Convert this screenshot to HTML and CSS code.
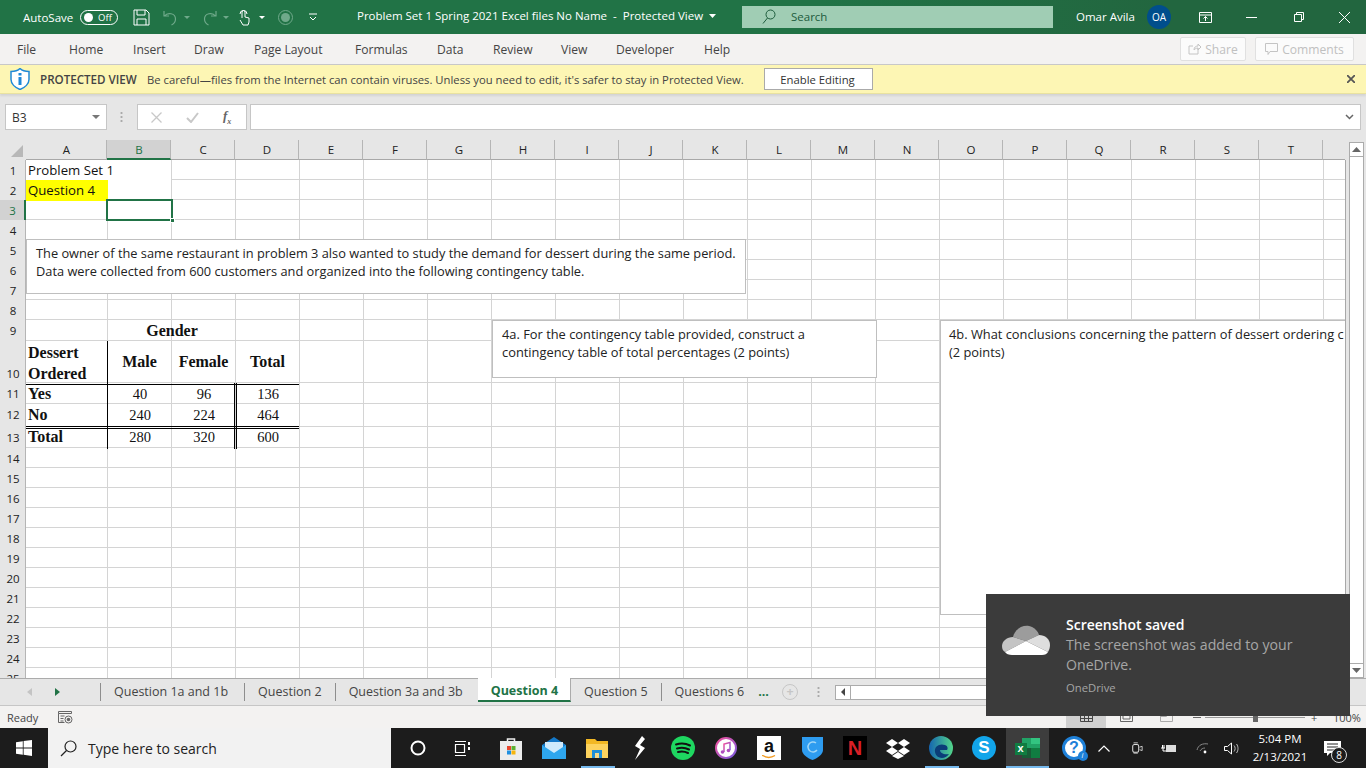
FILE: index.html
```html
<!DOCTYPE html>
<html lang="en">
<head>
    <meta charset="UTF-8">
    <title>Problem Set 1 Spring 2021 Excel files No Name - Protected View</title>
    <link rel="stylesheet" href="styles.css">
</head>
<body>
    <div class="titlebar">
        <span class="autosave">AutoSave</span>
        <span class="toggle"><i></i>Off</span>
        <svg class="save" width="17" height="17" viewBox="0 0 17 17"><path d="M1 1h12l3 3v12H1zM4 1v5h8V1M4 16v-6h9v6" fill="none" stroke="#fff"/></svg>
        <svg class="undo" width="15" height="17" viewBox="0 0 15 17"><path d="M1 2v5h5M1.5 7c3-4 11-3 11 3 0 3-2 5-4 6" fill="none" stroke="#6fa98a" stroke-width="1.2"/></svg>
        <span class="qat-caret dim c1"></span>
        <svg class="redo" width="15" height="17" viewBox="0 0 15 17"><path d="M14 2v5H9M13.5 7c-3-4-11-3-11 3 0 3 2 5 4 6" fill="none" stroke="#6fa98a" stroke-width="1.2"/></svg>
        <span class="qat-caret dim c2"></span>
        <svg class="touch" width="12" height="17" viewBox="0 0 12 17"><path d="M4 9V3a1.5 1.5 0 0 1 3 0v5l4 1v4l-1 3H5L2 11M2 5a3.5 3.5 0 0 1 7 0" fill="none" stroke="#fff"/></svg>
        <span class="qat-caret c3"></span>
        <span class="record"><i></i></span>
        <svg class="more" width="8" height="8" viewBox="0 0 8 8"><path d="M0 1h8M1 4l3 3 3-3" fill="none" stroke="#fff"/></svg>
        <span class="doc-title">Problem Set 1 Spring 2021 Excel files No Name &nbsp;-&nbsp; Protected View &nbsp;<svg width="7" height="4" viewBox="0 0 7 4"><path d="M0 0l3.5 4L7 0z" fill="#fff"/></svg></span>
        <div class="searchbox">
            <svg width="14" height="16" viewBox="0 0 14 16"><circle cx="8.5" cy="5.5" r="4.5" fill="none" stroke="#1d5c3c"/><path d="M5.5 9L1 14.5" stroke="#1d5c3c"/></svg>
            <span>Search</span>
        </div>
        <span class="username">Omar Avila</span>
        <span class="avatar">OA</span>
        <svg class="ribbon-opt" width="13" height="11" viewBox="0 0 13 11"><path d="M.5.5h12v10H.5zM.5 3h12M6.5 9V4.5M4.5 6.5l2-2 2 2" fill="none" stroke="#fff"/></svg>
        <span class="win-btn"><svg width="11" height="10" viewBox="0 0 11 10"><path d="M0 5.5h11" stroke="#fff"/></svg></span>
        <span class="win-btn"><svg width="10" height="10" viewBox="0 0 10 10"><path d="M.5 2.5h7v7h-7zM2.5 2.5v-2h7v7h-2" fill="none" stroke="#fff"/></svg></span>
        <span class="win-btn last"><svg width="11" height="11" viewBox="0 0 11 11"><path d="M0 0l11 11M11 0L0 11" stroke="#fff"/></svg></span>
    </div>

    <div class="tabs">
        <span class="tab file">File</span>
        <span class="tab home">Home</span>
        <span class="tab insert">Insert</span>
        <span class="tab draw">Draw</span>
        <span class="tab layout">Page Layout</span>
        <span class="tab formulas">Formulas</span>
        <span class="tab data">Data</span>
        <span class="tab review">Review</span>
        <span class="tab view">View</span>
        <span class="tab developer">Developer</span>
        <span class="tab help">Help</span>
        <span class="tab-btn share"><svg width="13" height="12" viewBox="0 0 13 12"><path d="M10 5v6H1V3h4M6 7c0-3 2-4 4-4V1l3 3-3 3V5C8 5 7 6 6 7z" fill="none" stroke="#c4c4c4"/></svg>Share</span>
        <span class="tab-btn comments"><svg width="13" height="12" viewBox="0 0 13 12"><path d="M.5.5h12v8H5l-2 3v-3H.5z" fill="none" stroke="#c4c4c4"/></svg>Comments</span>
    </div>

    <div class="protected">
        <svg class="shield" width="20" height="22" viewBox="0 0 20 22"><path d="M10 .5c2 2 5 3 9 3v8c0 4-4 8-9 10-5-2-9-6-9-10v-8c4 0 7-1 9-3z" fill="#fff" stroke="#1e88d8" stroke-width="1.5"/><path d="M8.5 9h3v8h-3zM8.5 5h3v2.5h-3z" fill="#1e88d8"/></svg>
        <b>PROTECTED VIEW</b>
        <span class="prot-msg">Be careful—files from the Internet can contain viruses. Unless you need to edit, it's safer to stay in Protected View.</span>
        <button class="enable">Enable Editing</button>
        <svg class="prot-close" width="8" height="8" viewBox="0 0 8 8"><path d="M0 0l8 8M8 0L0 8" stroke="#555" stroke-width="1.8"/></svg>
    </div>

    <div class="formula-bar">
        <div class="namebox">B3<span class="caret"></span></div>
        <span class="dots"></span>
        <div class="fx-btns">
            <svg width="11" height="11" viewBox="0 0 11 11"><path d="M.5.5l10 10M10.5.5l-10 10" stroke="#c8c8c8" stroke-width="1.3"/></svg>
            <svg width="13" height="11" viewBox="0 0 13 11"><path d="M1 6l4 4 7-9" fill="none" stroke="#c8c8c8" stroke-width="2"/></svg>
            <span class="fx">f<sub>x</sub></span>
        </div>
        <div class="formula-input"><svg width="9" height="6" viewBox="0 0 9 6"><path d="M1 1l3.5 3.5L8 1" fill="none" stroke="#666" stroke-width="1.5"/></svg></div>
    </div>

    <div class="sheet">
        <div class="col-heads">
            <span class="corner"></span>
            <span class="ch wide">A</span>
            <span class="ch sel">B</span>
            <span class="ch">C</span><span class="ch">D</span><span class="ch">E</span><span class="ch">F</span><span class="ch">G</span>
            <span class="ch">H</span><span class="ch">I</span><span class="ch">J</span><span class="ch">K</span><span class="ch">L</span>
            <span class="ch">M</span><span class="ch">N</span><span class="ch">O</span><span class="ch">P</span><span class="ch">Q</span>
            <span class="ch">R</span><span class="ch">S</span><span class="ch">T</span>
            <span class="ch rest"></span>
        </div>
        <div class="grid">
            <div class="row"><span class="rh">1</span><span class="cell spill">Problem Set 1</span></div>
            <div class="row"><span class="rh">2</span><span class="cell yellow">Question 4</span></div>
            <div class="row"><span class="rh sel">3</span></div>
            <div class="row"><span class="rh">4</span></div>
            <div class="row"><span class="rh">5</span></div>
            <div class="row"><span class="rh">6</span></div>
            <div class="row"><span class="rh">7</span></div>
            <div class="row"><span class="rh">8</span></div>
            <div class="row h21"><span class="rh">9</span><span class="cell gender">Gender</span></div>
            <div class="row h42 thick-bottom"><span class="rh bottom">10</span><span class="cell tnr left thick-r two-line">Dessert<br>Ordered</span><span class="cell tnr">Male</span><span class="cell tnr">Female</span><span class="cell tnr">Total</span></div>
            <div class="row h21"><span class="rh">11</span><span class="cell tnr left thick-r">Yes</span><span class="cell num">40</span><span class="cell num double-r">96</span><span class="cell num">136</span></div>
            <div class="row h23 double-bottom"><span class="rh">12</span><span class="cell tnr left thick-r">No</span><span class="cell num">240</span><span class="cell num double-r">224</span><span class="cell num">464</span></div>
            <div class="row h21 total"><span class="rh">13</span><span class="cell tnr left thick-r">Total</span><span class="cell num">280</span><span class="cell num double-r">320</span><span class="cell num">600</span></div>
            <div class="row"><span class="rh">14</span></div>
            <div class="row"><span class="rh">15</span></div>
            <div class="row"><span class="rh">16</span></div>
            <div class="row"><span class="rh">17</span></div>
            <div class="row"><span class="rh">18</span></div>
            <div class="row"><span class="rh">19</span></div>
            <div class="row"><span class="rh">20</span></div>
            <div class="row"><span class="rh">21</span></div>
            <div class="row"><span class="rh">22</span></div>
            <div class="row"><span class="rh">23</span></div>
            <div class="row"><span class="rh">24</span></div>
            <div class="row"><span class="rh">25</span></div>

            <div class="cell-cursor"></div>
            <div class="textbox box-intro">The owner of the same restaurant in problem 3 also wanted to study the demand for dessert during the same period.<br>Data were collected from 600 customers and organized into the following contingency table.</div>
            <div class="textbox box-4a">4a. For the contingency table provided, construct a<br>contingency table of total percentages (2 points)</div>
            <div class="textbox box-4b">4b. What conclusions concerning the pattern of dessert ordering c<br>(2 points)</div>
        </div>
        <div class="vscroll">
            <span class="sb-btn"><svg width="9" height="5" viewBox="0 0 9 5"><path d="M4.5 0L9 5H0z" fill="#666"/></svg></span>
            <span class="sb-thumb"></span>
            <span class="sb-btn"><svg width="9" height="5" viewBox="0 0 9 5"><path d="M4.5 5L9 0H0z" fill="#666"/></svg></span>
        </div>
    </div>

    <div class="sheet-tabs">
        <span class="nav-arrows">
            <svg width="5" height="8" viewBox="0 0 5 8"><path d="M5 0v8L0 4z" fill="#c4c4c4"/></svg>
            <svg width="5" height="8" viewBox="0 0 5 8"><path d="M0 0v8l5-4z" fill="#217346"/></svg>
        </span>
        <span class="stab first">Question 1a and 1b</span>
        <span class="stab">Question 2</span>
        <span class="stab last">Question 3a and 3b</span>
        <span class="stab active">Question 4</span>
        <span class="stab">Question 5</span>
        <span class="stab plain">Questions 6</span>
        <span class="ellipsis">...</span>
        <span class="add-sheet">+</span>
        <span class="dots small"></span>
        <div class="hscroll"><span class="sb-left"><svg width="4" height="8" viewBox="0 0 4 8"><path d="M4 0v8L0 4z" fill="#444"/></svg></span></div>
    </div>

    <div class="statusbar">
        <span class="ready">Ready</span>
        <svg width="15" height="13" viewBox="0 0 15 13"><path d="M.5.5h13v2H.5zM.5 2.5v9h6M2.5 5h4M2.5 7.5h3M2.5 10h3" fill="none" stroke="#666"/><circle cx="10.5" cy="8.5" r="3.5" fill="none" stroke="#666"/><circle cx="10.5" cy="8.5" r="1.8" fill="#666"/></svg>
        <div class="view-btns">
            <span class="vbtn on"><svg width="13" height="10" viewBox="0 0 13 10"><path d="M.5.5h12v9H.5zM.5 3.5h12M.5 6.5h12M4.5.5v9M8.5.5v9" fill="none" stroke="#444"/></svg></span>
            <span class="vbtn"><svg width="13" height="10" viewBox="0 0 13 10"><path d="M.5.5h12v9H.5zM3 3h7v4H3z" fill="none" stroke="#666"/></svg></span>
            <span class="vbtn"><svg width="13" height="10" viewBox="0 0 13 10"><path d="M.5.5h12v9H.5zM6.5.5v4H.5" fill="none" stroke="#aaa"/></svg></span>
        </div>
        <span class="zoom-minus"></span>
        <div class="zoom-track"><i></i></div>
        <span class="zoom-plus">+</span>
        <span class="zoom-pct">100%</span>
    </div>

    <div class="taskbar">
        <span class="start"><svg width="16" height="16" viewBox="0 0 16 16"><path d="M0 2.2l6.8-1V7.6H0zM7.600 1.100L16 0v7.600H7.600zM0 8.400h6.800v6.400L0 13.800zM7.600 8.400H16V16l-8.400-1.200z" fill="#fff"/></svg></span>
        <div class="tb-search">
            <svg width="17" height="17" viewBox="0 0 17 17"><circle cx="10.5" cy="6.5" r="5.5" fill="none" stroke="#222" stroke-width="1.2"/><path d="M6.5 10.5L1 16" stroke="#222" stroke-width="1.2"/></svg>
            <span>Type here to search</span>
        </div>
        <span class="tb-item cortana"><svg width="16" height="16" viewBox="0 0 16 16"><circle cx="8" cy="8" r="6.5" fill="none" stroke="#fff" stroke-width="2"/></svg></span>
        <span class="tb-item taskview"><svg width="16" height="15" viewBox="0 0 16 15"><path d="M1 .5h11M1 14.5h11M1.5 3.5h9v8h-9z" fill="none" stroke="#fff" stroke-width="1.2"/><path d="M14 1h2v3h-2zM14 6h2v3h-2z" fill="#fff"/></svg></span>
        <span class="tb-item"><svg width="24" height="24" viewBox="0 0 24 24"><path d="M8.5 6V3h7v3" fill="none" stroke="#eee" stroke-width="1.5"/><path d="M1 5h22v19H1z" fill="#ececec"/><path d="M8 10h4v4H8z" fill="#e8452c"/><path d="M12.5 10h4v4h-4z" fill="#5bb030"/><path d="M8 14.5h4v4H8z" fill="#1f8fe0"/><path d="M12.5 14.5h4v4h-4z" fill="#f5b50d"/></svg></span>
        <span class="tb-item"><svg width="24" height="22" viewBox="0 0 24 22"><path d="M0 8L12 0l12 8v14H0z" fill="#1478c8"/><path d="M3 5h18v6l-9 6-9-6z" fill="#cfeafc"/><path d="M0 8l12 8 12-8v14H0z" fill="#2ea6ee"/></svg></span>
        <span class="tb-item running"><svg width="22" height="19" viewBox="0 0 22 19"><path d="M0 0h9l2 2h11v17H0z" fill="#f2b824"/><path d="M0 5h22v14H0z" fill="#fdd35e"/><path d="M6 11h10v8H6z" fill="#1f8fd8"/><path d="M9 14h4v5H9z" fill="#f6d98a"/></svg></span>
        <span class="tb-item"><svg width="12" height="24" viewBox="0 0 12 24"><path d="M8 0L1 10l5 3-5 11 10-12-5-3 5-6z" fill="#fff"/></svg></span>
        <span class="tb-item"><svg width="24" height="24" viewBox="0 0 24 24"><circle cx="12" cy="12" r="12" fill="#1ed760"/><path d="M5 8.5c5-1.5 10-1 14 1M6 12.500c4-1 8.500-.7 12 1M7 16c3.500-.8 7-.5 10 1" fill="none" stroke="#111" stroke-width="2" stroke-linecap="round"/></svg></span>
        <span class="tb-item"><svg width="22" height="22" viewBox="0 0 22 22"><defs><linearGradient id="itunes" x1="0" y1="0" x2="1" y2="1"><stop offset="0" stop-color="#f2509a"/><stop offset="1" stop-color="#7a5be0"/></linearGradient></defs><circle cx="11" cy="11" r="10" fill="#fff" stroke="url(#itunes)" stroke-width="2"/><path d="M9 15V7l6-1.5V13" fill="none" stroke="url(#itunes)" stroke-width="1.5"/><circle cx="7.5" cy="15" r="1.8" fill="#b04fc0"/><circle cx="13.5" cy="13.5" r="1.8" fill="#b04fc0"/></svg></span>
        <span class="tb-item amazon">a<svg width="14" height="4" viewBox="0 0 14 4"><path d="M0 0c4 3 9 3 13 .5" fill="none" stroke="#f29a1f" stroke-width="1.3"/></svg></span>
        <span class="tb-item"><svg width="21" height="24" viewBox="0 0 21 24"><path d="M0 1h21v13c0 4-5 8-10.5 10C5 22 0 18 0 14z" fill="#2e9cf0"/><path d="M14 7a5 5 0 1 0 1 7" fill="none" stroke="#9fd6f7" stroke-width="1.5"/></svg></span>
        <span class="tb-item netflix">N</span>
        <span class="tb-item"><svg width="24" height="21" viewBox="0 0 24 21"><path d="M6 1l6 4-6 4-6-4zM18 1l6 4-6 4-6-4zM6 9l6 4-6 4-6-4zM18 9l6 4-6 4-6-4zM12 14l6 4-6 3-6-3z" fill="#fff"/></svg></span>
        <span class="tb-item running"><svg width="24" height="24" viewBox="0 0 24 24"><defs><linearGradient id="edge" x1="0" y1="0" x2="1" y2="0"><stop offset="0" stop-color="#1565b0"/><stop offset="1" stop-color="#53d68a"/></linearGradient></defs><circle cx="12" cy="12" r="12" fill="url(#edge)"/><path d="M6 16c-1-6 5-9 10-7 3 1 3 4 2 5H11c0 3 4 5 9 4-4 6-13 5-14-2z" fill="#0b3d78"/></svg></span>
        <span class="tb-item skype">S</span>
        <span class="tb-item excel">
            <svg class="excel-logo" width="24" height="20" viewBox="0 0 24 20"><path d="M6 0h18v20H6z" fill="#21a366"/><path d="M15 0h9v6h-9z" fill="#33c481"/><path d="M6 10h9v10H6z" fill="#185c37"/><path d="M15 10h9v10h-9z" fill="#107c41"/></svg>
            <b>x</b>
        </span>
        <span class="tb-item help"><span class="help-q">?</span><i>i</i></span>
        <svg class="tray-up" width="12" height="7" viewBox="0 0 12 7"><path d="M.5 6.5L6 1l5.5 5.5" fill="none" stroke="#fff" stroke-width="1.2"/></svg>
        <svg class="tray-meet" width="12" height="14" viewBox="0 0 14 14"><rect x="2" y="3" width="7" height="9" rx="2" fill="none" stroke="#ddd" stroke-width="1.2"/><path d="M3 1h5M10 6l3-1v5l-3-1M3 13h5" fill="none" stroke="#ddd"/></svg>
        <svg class="tray-power" width="16" height="11" viewBox="0 0 16 11"><path d="M5 2h10v7H5z" fill="#ddd"/><path d="M0 5h4M1.5 2v3M3 2v3M2 5v3h3" fill="none" stroke="#fff"/></svg>
        <svg class="tray-wifi" width="14" height="12" viewBox="0 0 14 12"><path d="M1 8c1-5 6-7 11-6M4 9c1-2 3-3 5-3" fill="none" stroke="#888"/><circle cx="9" cy="10" r="1.4" fill="#fff"/></svg>
        <svg class="tray-vol" width="16" height="13" viewBox="0 0 16 13"><path d="M.5 4.5h3l4-3.500v11l-4-3.500h-3z" fill="none" stroke="#fff"/><path d="M10 3.500c1.500 1.500 1.500 4.500 0 6M12.500 2c2 2.500 2 6.500 0 9" fill="none" stroke="#bbb"/></svg>
        <div class="clock"><span>5:04 PM</span><span>2/13/2021</span></div>
        <span class="notify">
            <svg width="17" height="15" viewBox="0 0 17 15"><path d="M0 0h17v12H6l-3 3v-3H0z" fill="#fff"/><path d="M3 3h11M3 6h11M3 9h7" stroke="#222"/></svg>
            <em>8</em>
        </span>
    </div>

    <div class="toast">
        <svg class="toast-cloud" width="48" height="32" viewBox="0 0 48 32"><path d="M11 12C13 4 20 0 27 1c5 1 9 5 10 9L24 16z" fill="#9c9c9c"/><path d="M11 12c-6 0-11 4-11 9 0 3 1 5 3 6l21-11z" fill="#c4c4c4"/><path d="M37 10c6 0 11 4 11 10 0 3-1 5-2 7L24 16z" fill="#dedede"/><path d="M3 27c1 2 4 3 7 3h30c3 0 5-1 6-3L24 16z" fill="#fff"/></svg>
        <div class="toast-body">
            <strong>Screenshot saved</strong>
            <p>The screenshot was added to your OneDrive.</p>
            <small>OneDrive</small>
        </div>
    </div>
</body>
</html>
```

FILE: styles.css
```css
html, body {
    margin: 0;
    padding: 0;
    height: 768px;
    overflow: hidden;
}

body {
    width: 1366px;
    position: relative;
    font-family: 'Open Sans', 'Noto Sans', Arial, sans-serif;
    font-size: 12px;
    color: #333;
    background-color: #e6e6e6;
}

svg {
    flex: none;
}

/* title bar */
.titlebar {
    height: 34px;
    background: linear-gradient(to right, #217346 60%, #22663f 85%);
    color: #fff;
    display: flex;
    align-items: center;
    padding-left: 23px;
    box-sizing: border-box;
}

.autosave {
    width: 57px;
    font-size: 11.5px;
}

.toggle {
    width: 38px;
    height: 15px;
    border: 1px solid #fff;
    border-radius: 9px;
    display: flex;
    align-items: center;
    font-size: 9.5px;
    box-sizing: border-box;
    padding-left: 3px;
    gap: 5px;
}

.toggle i {
    width: 9px;
    height: 9px;
    background-color: #fff;
    border-radius: 50%;
}

.save {
    margin-left: 15px;
}

.undo {
    margin-left: 13px;
}

.redo {
    margin-left: 12px;
}

.touch {
    margin-left: 9px;
}

.qat-caret {
    width: 0;
    height: 0;
    border-left: 3px solid transparent;
    border-right: 3px solid transparent;
    border-top: 3px solid #fff;
}

.qat-caret.dim {
    border-top-color: #6fa98a;
}

.qat-caret.c1,
.qat-caret.c2 {
    margin-left: 6px;
}

.qat-caret.c3 {
    margin-left: 9px;
}

.record {
    width: 15px;
    height: 15px;
    margin-left: 13px;
    border: 1px solid #6fa98a;
    border-radius: 50%;
    box-sizing: border-box;
    display: flex;
    align-items: center;
    justify-content: center;
}

.record i {
    width: 9px;
    height: 9px;
    border-radius: 50%;
    background-color: #6fa98a;
}

.more {
    margin-left: 16px;
}

.doc-title {
    margin-left: 40px;
    margin-bottom: 3px;
    width: 385px;
    font-size: 11.5px;
    white-space: nowrap;
}

.doc-title svg {
    vertical-align: 2px;
}

.searchbox {
    width: 311px;
    height: 22px;
    margin-bottom: 1px;
    background-color: #a0cdb4;
    color: #1d5c3c;
    display: flex;
    align-items: center;
    padding-left: 20px;
    gap: 15px;
    box-sizing: border-box;
    font-size: 11.5px;
}

.username {
    margin-left: 23px;
    margin-bottom: 1px;
    width: 59px;
    font-size: 11.5px;
    white-space: nowrap;
}

.avatar {
    width: 24px;
    height: 24px;
    margin-left: 12px;
    border-radius: 50%;
    background-color: #004e8c;
    font-size: 10px;
    text-align: center;
    line-height: 24px;
}

.ribbon-opt {
    margin-left: 28px;
    margin-right: 15px;
}

.win-btn {
    width: 48px;
    display: flex;
    justify-content: center;
}

.win-btn.last {
    width: 43px;
}

/* ribbon tabs */
.tabs {
    height: 31px;
    background-color: #f3f2f1;
    border-bottom: 1px solid #c8c8c8;
    box-sizing: border-box;
    position: relative;
}

.tab {
    position: absolute;
    top: 7px;
    font-size: 12.1px;
    color: #444;
}

.tab.file { left: 17px; }
.tab.home { left: 69px; }
.tab.insert { left: 133px; }
.tab.draw { left: 194px; }
.tab.layout { left: 254px; }
.tab.formulas { left: 355px; }
.tab.data { left: 437px; }
.tab.review { left: 493px; }
.tab.view { left: 561px; }
.tab.developer { left: 616px; }
.tab.help { left: 704px; }

.tab-btn {
    position: absolute;
    top: 3px;
    height: 24px;
    border: 1px solid #e0e0e0;
    background-color: #fbfbfb;
    border-radius: 2px;
    box-sizing: border-box;
    color: #c0c0c0;
    display: flex;
    align-items: center;
    justify-content: center;
    gap: 4px;
    font-size: 12.1px;
}

.tab-btn.share {
    left: 1180px;
    width: 66px;
}

.tab-btn.comments {
    left: 1255px;
    width: 99px;
}

/* protected view */
.protected {
    height: 29px;
    background-color: #fdf6b4;
    border-bottom: 1px solid #e9e2a0;
    box-sizing: border-box;
    display: flex;
    align-items: center;
    padding-left: 10px;
    font-size: 11.27px;
    color: #444;
    position: relative;
    box-shadow: 0 2px 2px rgba(0, 0, 0, 0.08);
}

.protected b {
    font-weight: 600;
    font-size: 11.6px;
    margin-left: 10px;
    width: 107px;
    white-space: nowrap;
}

.prot-msg {
    width: 617px;
    white-space: nowrap;
}

.enable {
    width: 109px;
    height: 22px;
    background-color: #fff;
    border: 1px solid #aaa;
    font-family: inherit;
    font-size: 11.3px;
    color: #333;
    padding: 0 2px 0 0;
}

.prot-close {
    margin-left: auto;
    margin-right: 11px;
}

/* formula bar */
.formula-bar {
    height: 46px;
    box-sizing: border-box;
    padding-top: 10px;
    display: flex;
    align-items: flex-start;
}

.namebox {
    width: 102px;
    height: 26px;
    margin-left: 5px;
    background-color: #fff;
    border: 1px solid #c6c6c6;
    box-sizing: border-box;
    padding-left: 6px;
    line-height: 25px;
    position: relative;
}

.caret {
    position: absolute;
    right: 6px;
    top: 10px;
    border-left: 4px solid transparent;
    border-right: 4px solid transparent;
    border-top: 4px solid #777;
}

.dots {
    width: 3px;
    height: 12px;
    margin: 7px 14px 0 13px;
    background-image: radial-gradient(circle, #aaa 1px, transparent 1.2px);
    background-size: 3px 4px;
}

.fx-btns {
    width: 110px;
    height: 26px;
    background-color: #fff;
    border: 1px solid #c6c6c6;
    box-sizing: border-box;
    display: flex;
    align-items: center;
    padding-left: 13px;
    gap: 24px;
}

.fx {
    font-family: 'Liberation Serif', serif;
    font-style: italic;
    font-size: 13px;
    font-weight: bold;
    color: #666;
}

.fx sub {
    font-size: 8px;
}

.formula-input {
    flex: 1;
    height: 26px;
    margin: 0 5px 0 3px;
    background-color: #fff;
    border: 1px solid #c6c6c6;
    box-sizing: border-box;
    display: flex;
    align-items: center;
    justify-content: flex-end;
    padding-right: 6px;
}

/* sheet */
.sheet {
    height: 539px;
    position: relative;
    overflow: hidden;
    background-color: #fff;
}

.col-heads {
    height: 20px;
    display: flex;
    background-color: #e6e6e6;
}

.corner {
    width: 26px;
    position: relative;
    flex: none;
}

.corner::after {
    content: "";
    position: absolute;
    right: 3px;
    bottom: 3px;
    border-left: 12px solid transparent;
    border-bottom: 12px solid #b8b8b8;
}

.ch {
    width: 64px;
    flex: none;
    box-sizing: border-box;
    padding-left: 1px;
    text-align: center;
    line-height: 19px;
    font-size: 11.5px;
    border-right: 1px solid #b5b5b5;
    border-bottom: 1px solid #a8a8a8;
    color: #222;
}

.ch.wide {
    width: 81px;
}

.ch.rest {
    width: 22px;
    border-right: none;
}

.ch.sel {
    background-color: #d2d2d2;
    color: #217346;
    border-bottom: 2px solid #217346;
}

.grid {
    position: relative;
    height: 519px;
    width: 1346px;
    border-right: 1px solid #a8a8a8;
    box-sizing: border-box;
    background-image:
        linear-gradient(#fff, #fff),
        linear-gradient(to right, #d4d4d4 1px, transparent 1px);
    background-size: 107px 100%, 64px 100%;
    background-position: 0 0, 107px 0;
    background-repeat: no-repeat, repeat-x;
}

.row {
    height: 20px;
    box-sizing: border-box;
    display: grid;
    grid-template-columns: 26px 81px repeat(3, 64px);
    border-bottom: 1px solid #d4d4d4;
}

.row.h21 { height: 21px; }
.row.h23 { height: 23px; }
.row.h42 { height: 42px; }

.rh {
    background-color: #e6e6e6;
    border-right: 1px solid #b5b5b5;
    margin-bottom: -1px;
    border-bottom: 1px solid #c4c4c4;
    box-sizing: border-box;
    padding-left: 1px;
    text-align: center;
    font-size: 11.5px;
    line-height: 21px;
    color: #222;
}

.rh.sel {
    background-color: #d2d2d2;
    color: #217346;
    border-right: 2px solid #217346;
}

.rh.bottom {
    line-height: 18px;
    padding-top: 24px;
}

.cell {
    font-size: 13.2px;
    line-height: 21px;
    padding-left: 2px;
    white-space: nowrap;
    color: #111;
}

.cell.spill {
    grid-column: 2 / 4;
    background-color: #fff;
}

.cell.yellow {
    background-color: #ffff00;
    margin-right: -1px;
}

.cell.gender {
    grid-column: 3 / 5;
    font-family: 'Liberation Serif', serif;
    font-weight: bold;
    font-size: 16px;
    text-align: center;
    padding: 0 0 0 2px;
}

.cell.tnr {
    font-family: 'Liberation Serif', serif;
    font-weight: bold;
    font-size: 16px;
    text-align: center;
    padding: 0 0 0 1px;
    line-height: 42px;
}

.cell.tnr.left {
    text-align: left;
    padding-left: 2px;
    line-height: 22px;
}

.cell.tnr.two-line {
    line-height: 21px;
    padding-top: 1px;
}

.cell.num {
    font-family: 'Liberation Serif', serif;
    font-size: 14.5px;
    text-align: center;
    padding: 0 0 0 2px;
    line-height: 22px;
}

.row.total .cell {
    line-height: 20px;
}

.thick-r {
    border-right: 1px solid #000;
    margin-right: -1px;
    margin-bottom: -1px;
}

.cell.num.double-r {
    border-right: 3px double #000;
    margin-right: -2px;
    margin-bottom: -1px;
    padding-left: 3px;
}

.thick-bottom .cell {
    border-bottom: 1px solid #000;
    margin-bottom: -1px;
}

.double-bottom .cell,
.double-bottom .cell.num.double-r {
    border-bottom: 3px double #000;
    margin-bottom: -1px;
}

.cell-cursor {
    position: absolute;
    left: 106px;
    top: 39px;
    width: 67px;
    height: 22px;
    border: 2px solid #217346;
    box-sizing: border-box;
}

.cell-cursor::after {
    content: "";
    position: absolute;
    right: -4px;
    bottom: -4px;
    width: 5px;
    height: 5px;
    background-color: #217346;
    border: 1px solid #fff;
    box-sizing: border-box;
}

.textbox {
    position: absolute;
    background-color: #fff;
    border: 1px solid #bfbfbf;
    box-sizing: border-box;
    font-size: 12.85px;
    line-height: 18px;
    color: #222;
    white-space: nowrap;
    overflow: hidden;
}

.box-intro {
    left: 26px;
    top: 79px;
    width: 720px;
    height: 55px;
    padding: 4px 9px;
    font-size: 12.8px;
}

.box-4a {
    left: 492px;
    top: 160px;
    width: 385px;
    height: 58px;
    padding: 4px 9px;
}

.box-4b {
    left: 940px;
    top: 160px;
    width: 405px;
    height: 295px;
    padding: 4px 8px;
    border-right: none;
}

.vscroll {
    position: absolute;
    right: 0;
    top: 0;
    width: 20px;
    height: 100%;
    background-color: #e6e6e6;
    display: flex;
    flex-direction: column;
    align-items: center;
    padding: 2px 0 1px;
    box-sizing: border-box;
}

.sb-btn {
    width: 15px;
    height: 15px;
    background-color: #fff;
    border: 1px solid #ababab;
    box-sizing: border-box;
    display: flex;
    align-items: center;
    justify-content: center;
    flex: none;
}

.sb-thumb {
    flex: 1;
    width: 15px;
    background-color: #fff;
    border: 1px solid #ababab;
    border-width: 0 1px;
    box-sizing: border-box;
}

/* sheet tabs */
.sheet-tabs {
    height: 28px;
    margin-top: -1px;
    position: relative;
    background-color: #e6e6e6;
    border-top: 1px solid #ababab;
    border-bottom: 1px solid #c6c6c6;
    box-sizing: border-box;
    display: flex;
    align-items: center;
    font-size: 12.5px;
    color: #444;
}

.nav-arrows {
    width: 100px;
    flex: none;
    box-sizing: border-box;
    padding-left: 27px;
    display: flex;
    gap: 23px;
}

.stab {
    height: 18px;
    line-height: 18px;
    padding: 0 13px;
    border-left: 1px solid #8e8e8e;
    white-space: nowrap;
}

.stab.first {
    padding-right: 16px;
}

.stab.last {
    padding-right: 15px;
}

.stab.active {
    align-self: flex-start;
    height: 24px;
    line-height: 26px;
    margin-top: -1px;
    background-color: #fff;
    color: #217346;
    font-weight: 700;
    border-left: none;
    border-right: 1px solid #ababab;
    border-bottom: 2px solid #217346;
    box-sizing: border-box;
    padding: 0 12px 0 13px;
}

.stab.active + .stab {
    border-left: none;
}

.stab.plain {
    padding-right: 0;
}

.ellipsis {
    margin-left: 14px;
    color: #217346;
    font-weight: 700;
    width: 24px;
    line-height: 12px;
}

.add-sheet {
    width: 16px;
    height: 16px;
    border: 1px solid #c6c6c6;
    border-radius: 50%;
    box-sizing: border-box;
    color: #c6c6c6;
    text-align: center;
    line-height: 13px;
    font-weight: 700;
    flex: none;
}

.dots.small {
    margin: 0 15px 0 19px;
}

.hscroll {
    flex: 1;
    height: 15px;
    margin-right: 20px;
    background-color: #fff;
    border: 1px solid #ababab;
    box-sizing: border-box;
}

.sb-left {
    display: flex;
    width: 14px;
    height: 13px;
    border-right: 1px solid #ababab;
    align-items: center;
    justify-content: center;
}

/* status bar */
.statusbar {
    height: 22px;
    background-color: #f3f2f1;
    display: flex;
    align-items: center;
    padding-left: 7px;
    font-size: 11px;
    color: #444;
    position: relative;
    box-sizing: border-box;
}

.ready {
    width: 51px;
}

.view-btns {
    display: flex;
    margin-left: 993px;
    height: 100%;
}

.vbtn {
    width: 40px;
    display: flex;
    align-items: center;
    justify-content: center;
}

.vbtn.on {
    background-color: #d0d0d0;
}

.zoom-minus {
    width: 8px;
    height: 1px;
    background-color: #666;
    margin-left: 7px;
}

.zoom-track {
    width: 100px;
    height: 1px;
    margin-left: 4px;
    background-color: #999;
    position: relative;
}

.zoom-track i {
    position: absolute;
    left: 48px;
    top: -4px;
    width: 5px;
    height: 9px;
    background-color: #666;
}

.zoom-plus {
    margin-left: 6px;
    width: 22px;
}

.zoom-pct {
    font-size: 11px;
}

/* taskbar */
.taskbar {
    height: 40px;
    background-color: #1c1c1c;
    display: flex;
    align-items: center;
    position: relative;
    color: #fff;
}

.start {
    width: 48px;
    display: flex;
    justify-content: center;
    flex: none;
}

.tb-search {
    width: 343px;
    height: 40px;
    background-color: #f2f2f2;
    color: #222;
    display: flex;
    align-items: center;
    padding-left: 12px;
    gap: 11px;
    box-sizing: border-box;
    font-size: 14px;
    flex: none;
}

.tb-item {
    width: 43px;
    height: 40px;
    flex: none;
    display: flex;
    align-items: center;
    justify-content: center;
    position: relative;
    box-sizing: border-box;
}

.tb-item.cortana {
    width: 54px;
}

.tb-item.taskview {
    width: 34px;
    margin-right: 10.5px;
}

.tb-item.running::after {
    content: "";
    position: absolute;
    left: 5px;
    right: 4px;
    bottom: 0;
    height: 2px;
    background-color: #76b9ed;
}

.tb-item.amazon {
    width: 24px;
    height: 24px;
    margin: 0 9.5px;
    background-color: #fff;
    color: #111;
    font-family: 'Liberation Sans', Arial, sans-serif;
    font-weight: 700;
    font-size: 18px;
    line-height: 18px;
    flex-direction: column;
}

.tb-item.netflix {
    width: 24px;
    height: 24px;
    margin: 0 9.5px;
    background-color: #000;
    color: #d81f26;
    font-family: 'Liberation Sans', Arial, sans-serif;
    font-weight: 700;
    font-size: 20px;
}

.tb-item.skype {
    width: 24px;
    height: 24px;
    margin: 0 9.5px;
    background-color: #12a5ea;
    border-radius: 50%;
    font-family: 'Liberation Sans', Arial, sans-serif;
    font-weight: 700;
    font-size: 17px;
}

.tb-item.excel {
    background-color: #3d3d3d;
}

.excel-logo {
    margin-left: 1px;
}

.tb-item.excel::after {
    content: "";
    position: absolute;
    left: 0;
    right: 0;
    bottom: 0;
    height: 2px;
    background-color: #76b9ed;
}

.tb-item.excel b {
    position: absolute;
    left: 9px;
    top: 15px;
    width: 12px;
    height: 12px;
    background-color: #107c41;
    font-size: 11px;
    font-family: 'Liberation Sans', Arial, sans-serif;
    text-align: center;
    line-height: 11px;
}

.tb-item.help {
    margin-left: 4px;
}

.help-q {
    width: 24px;
    height: 24px;
    background-color: #fff;
    border: 3px solid #1e80d8;
    border-radius: 50%;
    box-sizing: border-box;
    color: #1e80d8;
    font-family: 'Liberation Sans', Arial, sans-serif;
    font-weight: 700;
    font-size: 16px;
    line-height: 18px;
    text-align: center;
}

.tb-item.help i {
    position: absolute;
    right: 8px;
    bottom: 7px;
    width: 10px;
    height: 10px;
    background-color: #1e80d8;
    border-radius: 50%;
    font-size: 7px;
    line-height: 10px;
    text-align: center;
}

.tray-up { margin-left: 2.5px; }
.tray-meet { margin-left: 21px; }
.tray-power { margin-left: 18px; }
.tray-wifi { margin-left: 19px; }
.tray-vol { margin-left: 14px; }

.clock {
    width: 70px;
    display: flex;
    flex-direction: column;
    align-items: center;
    font-size: 11.5px;
    line-height: 18px;
    margin-left: 5px;
}

.notify {
    position: relative;
    margin-left: 9px;
    display: flex;
}

.notify em {
    position: absolute;
    left: 7px;
    top: 6px;
    width: 14px;
    height: 14px;
    border: 1px solid #ddd;
    border-radius: 50%;
    background-color: #1c1c1c;
    font-style: normal;
    font-size: 10px;
    line-height: 14px;
    text-align: center;
}

/* notification */
.toast {
    position: absolute;
    left: 986px;
    top: 594px;
    width: 364px;
    height: 122px;
    background-color: #3b3b3b;
    color: #fff;
    display: flex;
    box-sizing: border-box;
    padding: 21px 0 0 16px;
}

.toast-cloud {
    margin-top: 10px;
}

.toast-body {
    margin-left: 16px;
    width: 250px;
}

.toast-body strong {
    display: block;
    font-size: 14px;
    font-weight: 600;
    line-height: 20px;
}

.toast-body p {
    margin: 0;
    font-size: 14.15px;
    line-height: 20px;
    color: #a6a6a6;
}

.toast-body small {
    display: block;
    margin-top: 5px;
    font-size: 11.3px;
    color: #a6a6a6;
}
```
